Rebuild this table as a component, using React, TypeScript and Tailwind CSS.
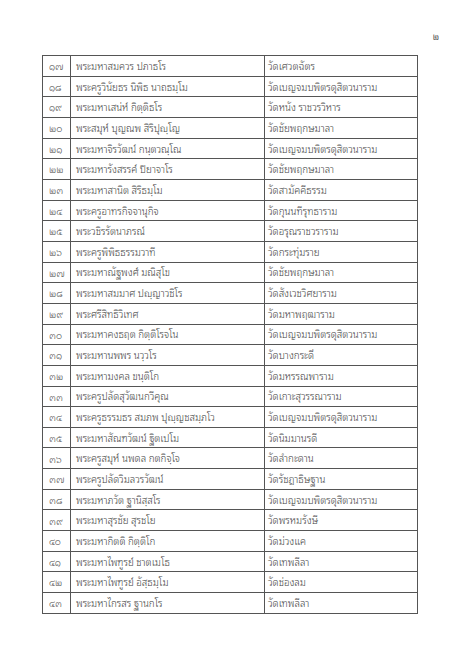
const rows: [string, string, string][] = [
  ["๑๗", "พระมหาสมควร ปภาธโร", "วัดเศวตฉัตร"],
  ["๑๘", "พระครูวินัยธร นิพิธ นาถธมฺโม", "วัดเบญจมบพิตรดุสิตวนาราม"],
  ["๑๙", "พระมหาเสน่ห์ กิตฺติธโร", "วัดหนัง ราชวรวิหาร"],
  ["๒๐", "พระสมุห์ บุญณพ สิริปุญฺโญ", "วัดชัยพฤกษมาลา"],
  ["๒๑", "พระมหาจิรวัฒน์ กนฺตวณฺโณ", "วัดเบญจมบพิตรดุสิตวนาราม"],
  ["๒๒", "พระมหารังสรรค์ ปิยาจาโร", "วัดชัยพฤกษมาลา"],
  ["๒๓", "พระมหาสานิต สิริธมฺโม", "วัดสามัคคีธรรม"],
  ["๒๔", "พระครูอาทรกิจจานุกิจ", "วัดกุนนทีรุทธาราม"],
  ["๒๕", "พระวชิรรัตนาภรณ์", "วัดอรุณราชวราราม"],
  ["๒๖", "พระครูพิพิธธรรมวาที", "วัดกระทุ่มราย"],
  ["๒๗", "พระมหาณัฐพงศ์ มณิสุโข", "วัดชัยพฤกษมาลา"],
  ["๒๘", "พระมหาสมมาศ ปญฺญาวชิโร", "วัดสังเวชวิศยาราม"],
  ["๒๙", "พระศรีสิทธิวิเทศ", "วัดมหาพฤฒาราม"],
  ["๓๐", "พระมหาคงธฤต กิตฺติโรจโน", "วัดเบญจมบพิตรดุสิตวนาราม"],
  ["๓๑", "พระมหานพพร นวฺวโร", "วัดบางกระดี่"],
  ["๓๒", "พระมหามงคล ขนฺติโก", "วัดมหรรณพาราม"],
  ["๓๓", "พระครูปลัดสุวัฒนกวีคุณ", "วัดเกาะสุวรรณาราม"],
  ["๓๔", "พระครูธรรมธร สมภพ ปุญฺญชสมฺภโว", "วัดเบญจมบพิตรดุสิตวนาราม"],
  ["๓๕", "พระมหาสัณฑวัฒน์ ฐิตเปโม", "วัดนิมมานรดี"],
  ["๓๖", "พระครูสมุห์ นพดล กตกิจฺโจ", "วัดลำกะดาน"],
  ["๓๗", "พระครูปลัดวิมลวรวัฒน์", "วัดรัชฎาธิษฐาน"],
  ["๓๘", "พระมหาภวัต ฐานิสฺสโร", "วัดเบญจมบพิตรดุสิตวนาราม"],
  ["๓๙", "พระมหาสุรชัย สุรชโย", "วัดพรหมรังษี"],
  ["๔๐", "พระมหากิตติ กิตฺติโก", "วัดม่วงแค"],
  ["๔๑", "พระมหาไพฑูรย์ ชาตเมโธ", "วัดเทพลีลา"],
  ["๔๒", "พระมหาไพฑูรย์ อัสฺธมฺโม", "วัดช่องลม"],
  ["๔๓", "พระมหาไกรสร ฐานกโร", "วัดเทพลีลา"],
];

export default function App() {
  return (
    <div className="relative h-[670px] w-[474px] bg-white font-['Noto_Sans_Thai_Looped','Noto_Sans_Thai','Noto_Sans','Liberation_Sans',sans-serif] text-[#444444]">
      <div className="flex justify-end pr-[35px] pt-[32px] text-[8px] leading-[10px]">๒</div>
      <div className="ml-[42px] mt-[13px] w-[375px]">
        <table className="w-full table-fixed border-collapse border border-[#555555]">
          <colgroup>
            <col className="w-[28px]" />
            <col className="w-[194px]" />
            <col className="w-[153px]" />
          </colgroup>
          <tbody>
            {rows.map(([no, name, wat]) => (
              <tr key={no} className="h-[20.67px]">
                <td className="border border-[#555555] pl-[6px] text-[9.5px] font-light leading-none">{no}</td>
                <td className="border border-[#555555] pl-[5px] text-[9.8px] font-light leading-none whitespace-nowrap">{name}</td>
                <td className="border border-[#555555] pl-[3px] text-[9.8px] font-light leading-none whitespace-nowrap">{wat}</td>
              </tr>
            ))}
          </tbody>
        </table>
      </div>
    </div>
  );
}
